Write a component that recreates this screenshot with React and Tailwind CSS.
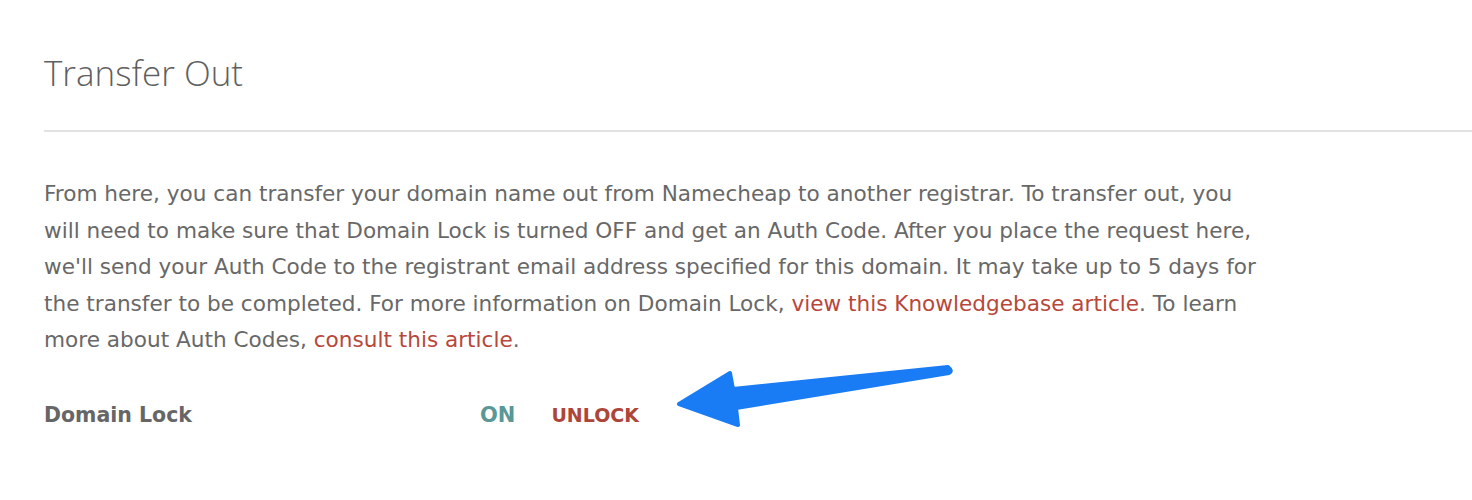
export default function App() {
  const font = { fontFamily: '"DejaVu Sans", "Liberation Sans", sans-serif' };
  const headFont = { fontFamily: '"Open Sans", "DejaVu Sans", sans-serif' };
  return (
    <div className="w-[1472px] h-[500px] bg-white relative overflow-hidden" style={font}>
      <div className="pl-[44px] pt-[50px]">
        <h1 className="text-[35px] leading-[46px] font-light text-[#5f5f5f]" style={headFont}>Transfer Out</h1>
      </div>
      <div className="ml-[44px] mt-[34px] h-[2px] bg-[#e2e2e2]"></div>
      <div className="pl-[44px] pt-[44px]">
        <p className="w-[1260px] text-[21.6px] leading-[36.5px] text-[#686868] whitespace-nowrap">
          From here, you can transfer your domain name out from Namecheap to another registrar. To transfer out, you<br />
          will need to make sure that Domain Lock is turned OFF and get an Auth Code. After you place the request here,<br />
          we'll send your Auth Code to the registrant email address specified for this domain. It may take up to 5 days for<br />
          the transfer to be completed. For more information on Domain Lock, <a className="text-[#b8473b]">view this Knowledgebase article</a>. To learn<br />
          more about Auth Codes, <a className="text-[#b8473b]">consult this article</a>.
        </p>
        <div className="flex items-center mt-[39px] h-[36px]">
          <div className="w-[436px] text-[20.5px] font-bold text-[#666]">Domain Lock</div>
          <div className="text-[21px] font-bold text-[#5a9797]">ON</div>
          <div className="ml-[36px] text-[19px] font-bold text-[#ad4638]">UNLOCK</div>
        </div>
      </div>
      <svg className="absolute left-0 top-0" width="1472" height="500" viewBox="0 0 1472 500">
        <path
          d="M679 404 L730 373 L733 389 L948 367 Q953 371 949 373 L736 408 L738 425 Z"
          fill="#1a7cf5"
          stroke="#1a7cf5"
          strokeWidth="4"
          strokeLinejoin="round"
        />
      </svg>
    </div>
  );
}
